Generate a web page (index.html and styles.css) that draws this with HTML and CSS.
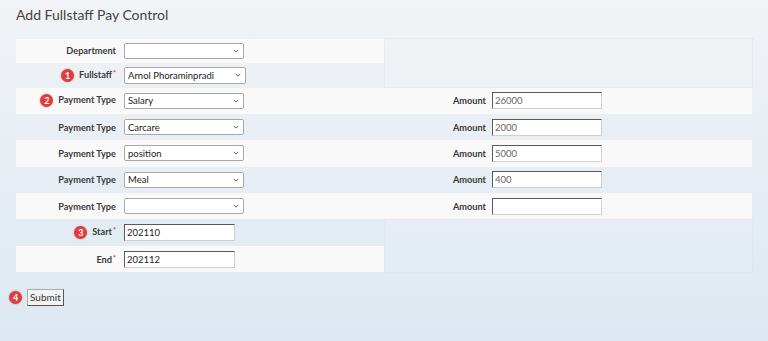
FILE: index.html
```html
<html lang="en">
<head>
    <meta charset="UTF-8">
    <title>Add Fullstaff Pay Control</title>
    <link rel="stylesheet" href="styles.css">
</head>
<body>
    <div class="page">
        <h1>Add Fullstaff Pay Control</h1>
        <table class="form-table">
            <colgroup>
                <col class="c-label">
                <col class="c-field">
                <col class="c-amt">
                <col class="c-field2">
            </colgroup>
            <tr class="odd short">
                <td class="lbl">Department</td>
                <td class="fld"><span class="sel"><select><option></option></select><svg class="chev" viewBox="0 0 8 5"><path d="M1 1l3 3 3-3" /></svg></span></td>
                <td class="blank" colspan="2" rowspan="2"></td>
            </tr>
            <tr class="short">
                <td class="lbl"><span class="badge">1</span>Fullstaff<span class="req">*</span></td>
                <td class="fld"><span class="sel wide"><select><option>Arnol Phoraminpradi</option></select><svg class="chev" viewBox="0 0 8 5"><path d="M1 1l3 3 3-3" /></svg></span></td>
            </tr>
            <tr class="odd">
                <td class="lbl"><span class="badge">2</span>Payment Type</td>
                <td class="fld"><span class="sel"><select><option>Salary</option></select><svg class="chev" viewBox="0 0 8 5"><path d="M1 1l3 3 3-3" /></svg></span></td>
                <td class="lbl">Amount</td>
                <td class="fld"><input type="text" class="amount" value="26000"></td>
            </tr>
            <tr>
                <td class="lbl">Payment Type</td>
                <td class="fld"><span class="sel"><select><option>Carcare</option></select><svg class="chev" viewBox="0 0 8 5"><path d="M1 1l3 3 3-3" /></svg></span></td>
                <td class="lbl">Amount</td>
                <td class="fld"><input type="text" class="amount" value="2000"></td>
            </tr>
            <tr class="odd">
                <td class="lbl">Payment Type</td>
                <td class="fld"><span class="sel"><select><option>position</option></select><svg class="chev" viewBox="0 0 8 5"><path d="M1 1l3 3 3-3" /></svg></span></td>
                <td class="lbl">Amount</td>
                <td class="fld"><input type="text" class="amount" value="5000"></td>
            </tr>
            <tr>
                <td class="lbl">Payment Type</td>
                <td class="fld"><span class="sel"><select><option>Meal</option></select><svg class="chev" viewBox="0 0 8 5"><path d="M1 1l3 3 3-3" /></svg></span></td>
                <td class="lbl">Amount</td>
                <td class="fld"><input type="text" class="amount" value="400"></td>
            </tr>
            <tr class="odd">
                <td class="lbl">Payment Type</td>
                <td class="fld"><span class="sel"><select><option></option></select><svg class="chev" viewBox="0 0 8 5"><path d="M1 1l3 3 3-3" /></svg></span></td>
                <td class="lbl">Amount</td>
                <td class="fld"><input type="text" class="amount" value=""></td>
            </tr>
            <tr>
                <td class="lbl"><span class="badge">3</span>Start<span class="req">*</span></td>
                <td class="fld"><input type="text" class="period" value="202110"></td>
                <td class="blank" colspan="2" rowspan="2"></td>
            </tr>
            <tr class="odd">
                <td class="lbl">End<span class="req">*</span></td>
                <td class="fld"><input type="text" class="period" value="202112"></td>
            </tr>
        </table>
        <div class="actions">
            <span class="badge">4</span><button type="button">Submit</button>
        </div>
    </div>
</body>
</html>
```

FILE: styles.css
```css
html, body {margin: 0; height: 100%;}
body {font-family: Lato, "Open Sans", sans-serif; color: #333; background: linear-gradient(#f1f3f6, #dde8f2);}
.page {padding: 6px 16px 0 16px;}
h1 {font-size: 14px; font-weight: normal; color: #444; margin: 0 0 14px 0; line-height: 18px;}
.form-table {width: 736px; border-collapse: collapse; table-layout: fixed;}
.c-label {width: 104px;}
.c-field {width: 264px;}
.c-amt {width: 106px;}
.c-field2 {width: 262px;}
.form-table td {height: 26.4px; padding: 0; font-size: 9.2px; vertical-align: middle;}
.form-table tr.short td {height: 24.5px;}
.form-table tr.odd td {background-color: #f9f9f9;}
.form-table td.blank, .form-table tr.odd td.blank {background-color: rgba(255, 255, 255, 0.08); border: 1px solid rgba(220, 228, 238, 0.5);}
.lbl {text-align: right; font-weight: bold; color: #3a3a3a; padding-right: 4px !important; white-space: nowrap;}
.fld {padding-left: 4px !important;}
.req {color: #d33; font-size: 7px; vertical-align: top; margin-left: 1px;}
.badge {display: inline-block; width: 13px; height: 13px; line-height: 13px; border-radius: 50%; background-color: #e23b3b; color: white; font-size: 9px; font-weight: bold; text-align: center; vertical-align: middle; margin-right: 5px; box-shadow: 0 0 2px rgba(120, 0, 0, 0.4);}
.sel {position: relative; display: inline-block; vertical-align: middle;}
.sel select {appearance: none; -webkit-appearance: none; width: 120px; height: 16px; border: 1px solid #a9a9a9; border-radius: 2px; background: white; font-family: Lato, sans-serif; font-size: 9.5px; color: #222; padding: 0 0 0 3px; margin: 0; display: block;}
.sel.wide select {width: 122px; height: 17px;}
.chev {position: absolute; right: 5px; top: 6px; width: 6px; height: 4px; fill: none; stroke: #555; stroke-width: 1.3;}
input[type="text"] {height: 17px; box-sizing: border-box; border: 1.5px solid; border-color: #5a5a5a #cfcfcf #cfcfcf #5a5a5a; background: white; font-family: Lato, sans-serif; font-size: 9.5px; padding: 0 2px; margin: 0; vertical-align: middle;}
input.period {width: 111px; color: #222;}
input.amount {width: 110px; color: #666; margin-left: -2px;}
.actions {margin-top: 16px; margin-left: -7px; display: flex; align-items: center;}
.actions .badge {margin-right: 5px;}
button {font-family: Lato, sans-serif; font-size: 10px; color: #333; background: #f3f3f3; border: 1px solid; border-color: #aaa #555 #555 #aaa; padding: 0 2px; height: 17px;}
```
